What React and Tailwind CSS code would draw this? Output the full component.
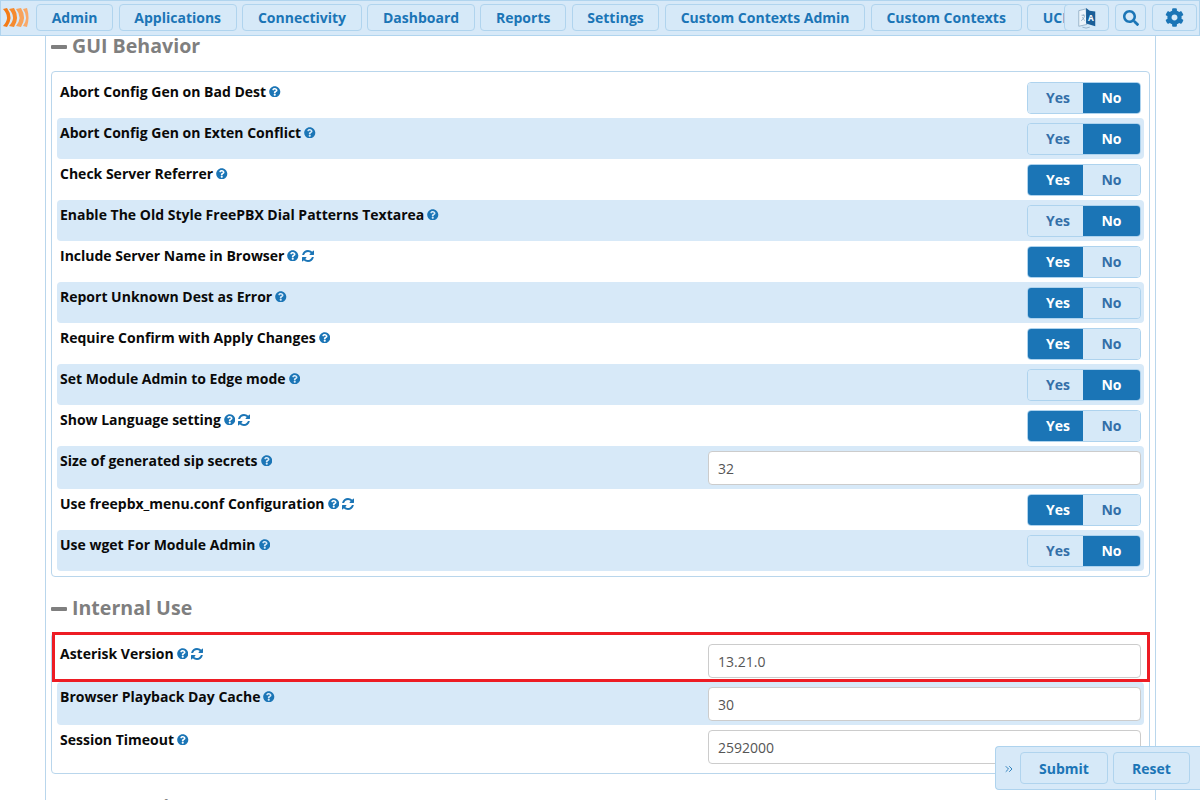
import React from 'react';
import { ChevronsRight } from 'lucide-react';
import { FaQuestionCircle, FaSearch, FaCog } from 'react-icons/fa';

const font = { fontFamily: '"Open Sans", sans-serif' };

const navItems = ['Admin', 'Applications', 'Connectivity', 'Dashboard', 'Reports', 'Settings', 'Custom Contexts Admin', 'Custom Contexts', 'UCP'];

const guiRows = [
  { label: 'Abort Config Gen on Bad Dest', value: 'No' },
  { label: 'Abort Config Gen on Exten Conflict', value: 'No' },
  { label: 'Check Server Referrer', value: 'Yes' },
  { label: 'Enable The Old Style FreePBX Dial Patterns Textarea', value: 'No' },
  { label: 'Include Server Name in Browser', value: 'Yes', sync: true },
  { label: 'Report Unknown Dest as Error', value: 'Yes' },
  { label: 'Require Confirm with Apply Changes', value: 'Yes' },
  { label: 'Set Module Admin to Edge mode', value: 'No' },
  { label: 'Show Language setting', value: 'Yes', sync: true },
  { label: 'Size of generated sip secrets', input: '32' },
  { label: 'Use freepbx_menu.conf Configuration', value: 'Yes', sync: true },
  { label: 'Use wget For Module Admin', value: 'No' },
];

const internalRows = [
  { label: 'Asterisk Version', input: '13.21.0', sync: true, flagged: true },
  { label: 'Browser Playback Day Cache', input: '30' },
  { label: 'Session Timeout', input: '2592000' },
];

const navBtn = 'h-[27px] shrink-0 rounded border border-[#b0d4ee] bg-[#d6e9f8] text-[#1b75b6] text-[14px] font-bold flex items-center justify-center';

const Logo = () => (
  <svg viewBox="0 0 27 19" className="w-[27px] h-[19px]">
    <path d="M0 1 Q8 9.5 0 18 L4 19 Q11 9.5 4 0 Z" fill="#f47b16" />
    <path d="M6 1 Q14 9.5 6 18 L11 19 Q17 9.5 11 0 Z" fill="#f58a2e" />
    <path d="M13 1 Q20 9.5 13 18 L18 19 Q24 9.5 18 0 Z" fill="#f7a35c" />
    <path d="M20 1 Q26 9.5 20 18 L24 19 Q27 9.5 24 0 Z" fill="#f9a969" />
  </svg>
);

const LanguageIcon = () => (
  <svg viewBox="0 0 20 24" className="w-[20px] h-[22px]">
    <path d="M1 4 L9 2 L10 19 L1 21 Z" fill="#eef5fb" stroke="#8fadc4" strokeWidth="0.9" />
    <path d="M4 9 H8 M6 8 V10 M7.5 10 Q6 14 3.5 15 M5 11 Q6 14 8 15" stroke="#8fadc4" strokeWidth="0.9" fill="none" />
    <path d="M9 1 L13 4 L19 5 V21 L9 18 Z" fill="#1b5f98" />
    <text x="11" y="15" fontSize="9" fontWeight="700" fill="#ffffff" style={font}>A</text>
    <path d="M5 22 Q9 24 13 22" stroke="#8fadc4" strokeWidth="0.9" fill="none" />
  </svg>
);

const RefreshIcon = () => (
  <svg viewBox="0 0 1792 1792" className="w-[14px] h-[14px] -ml-[1px] text-[#1b75b6]" fill="currentColor">
    <path d="M1639 1056q0 5-1 7-64 268-268 434.5t-478 166.5q-146 0-282.5-55t-243.5-157l-129 129q-19 19-45 19t-45-19-19-45v-448q0-26 19-45t45-19h448q26 0 45 19t19 45-19 45l-137 137q71 66 161 102t187 36q134 0 250-65t186-179q11-17 53-117 8-23 30-23h192q13 0 22.5 9.5t9.5 22.5zm25-800v448q0 26-19 45t-45 19h-448q-26 0-45-19t-19-45 19-45l138-138q-148-137-349-137-134 0-250 65t-186 179q-11 17-53 117-8 23-30 23h-199q-13 0-22.5-9.5t-9.5-22.5v-7q65-268 270-434.5t480-166.5q146 0 284 55.5t245 156.5l130-129q19-19 45-19t45 19 19 45z" />
  </svg>
);

const Toggle = ({ value }) => {
  const seg = 'flex items-center justify-center pb-[1px] text-[14px] font-bold';
  const on = 'bg-[#1b75b6] text-white';
  const off = 'bg-[#d6e9f8] text-[#336fa8]';
  return (
    <div className="w-[114px] h-[32px] flex rounded border border-[#aed3ee] overflow-hidden">
      <div className={`${seg} w-[55px] pl-[5px] ${value === 'Yes' ? on : off}`}>Yes</div>
      <div className={`${seg} w-[57px] ${value === 'No' ? on : off}`}>No</div>
    </div>
  );
};

const Row = ({ row, striped }) => (
  <div className={`relative flex justify-between rounded-sm pl-[3px] pr-[3px] pt-[5px] ${row.input ? 'h-[43px]' : 'h-[41px]'} ${striped ? 'bg-[#d7e9f8]' : ''}`}>
    <div className="flex items-center gap-[3px] h-[19px] text-[14px] font-bold text-[#0a0a0a] whitespace-nowrap">
      <span>{row.label}</span>
      <FaQuestionCircle className="w-[11.5px] h-[11.5px] text-[#1b75b6]" />
      {row.sync && <RefreshIcon />}
    </div>
    {row.input ? (
      <input
        readOnly
        value={row.input}
        className="w-[433px] h-[34px] px-[9px] rounded border border-[#cccccc] bg-white text-[14px] text-[#555555] outline-none"
      />
    ) : (
      <Toggle value={row.value} />
    )}
    {row.flagged && <div className="absolute -left-[5px] -right-[6px] -top-[7px] bottom-0 border-[3px] border-[#ed1c24]" />}
  </div>
);

const Section = ({ title, className }) => (
  <div className={`flex items-center gap-[5px] h-[24px] text-[19.6px] font-bold text-[#7f7f7f] ${className}`}>
    <div className="w-[16px] h-[4px] mt-[1px] rounded-[1px] bg-[#7f7f7f]" />
    <span>{title}</span>
  </div>
);

export default function App() {
  return (
    <div className="relative h-[800px] w-[1200px] overflow-hidden bg-white" style={font}>
      {/* top nav */}
      <div className="absolute top-0 left-0 right-0 z-10 h-[36px] bg-[#d7e9f8] border border-[#b0d4ee] overflow-hidden">
        <div className="flex items-center gap-[5.5px] h-[34px] pl-[2px] pb-[1px] whitespace-nowrap">
          <div className="w-[27px] mr-[0.5px] shrink-0 flex justify-center"><Logo /></div>
          {navItems.map((item) => (
            <div key={item} className={`${navBtn} px-[14.7px]`}>{item}</div>
          ))}
        </div>
        <div className="absolute top-[3px] right-[2px] flex gap-[6px]">
          <div className={`${navBtn} w-[45px]`}><LanguageIcon /></div>
          <div className={`${navBtn} w-[31px]`}><FaSearch className="w-[16px] h-[16px]" /></div>
          <div className={`${navBtn} w-[45px]`}><FaCog className="w-[19px] h-[19px]" /></div>
        </div>
      </div>

      {/* page body */}
      <div className="ml-[45px] w-[1111px] h-[800px] border-x border-[#b9d6ec] pt-[34px] px-[5px]">
        <Section title="GUI Behavior" />
        <div className="mt-[13px] h-[506px] rounded border border-[#b9d6ec] p-[5px]">
          {guiRows.map((row, i) => <Row key={row.label} row={row} striped={i % 2 === 1} />)}
        </div>
        <Section title="Internal Use" className="mt-[19px]" />
        <div className="mt-[13px] h-[141px] rounded border border-[#b9d6ec] px-[5px] pt-[5px]">
          {internalRows.map((row, i) => <Row key={row.label} row={row} striped={i % 2 === 1} />)}
        </div>
        <Section title="Page Settings" className="mt-[21px]" />
      </div>

      {/* floating action bar */}
      <div className="absolute left-[995px] top-[746px] right-0 h-[44px] flex items-center pl-[7px] rounded-l border border-r-0 border-[#aed3ee] bg-[#d7e9f8]">
        <ChevronsRight className="w-[12px] h-[12px] mt-[1px] text-[#1b75b6]" strokeWidth={1.75} />
        <div className={`${navBtn} w-[88px] h-[32px] ml-[5px]`}>Submit</div>
        <div className={`${navBtn} w-[77px] h-[32px] ml-[5px]`}>Reset</div>
      </div>
    </div>
  );
}
